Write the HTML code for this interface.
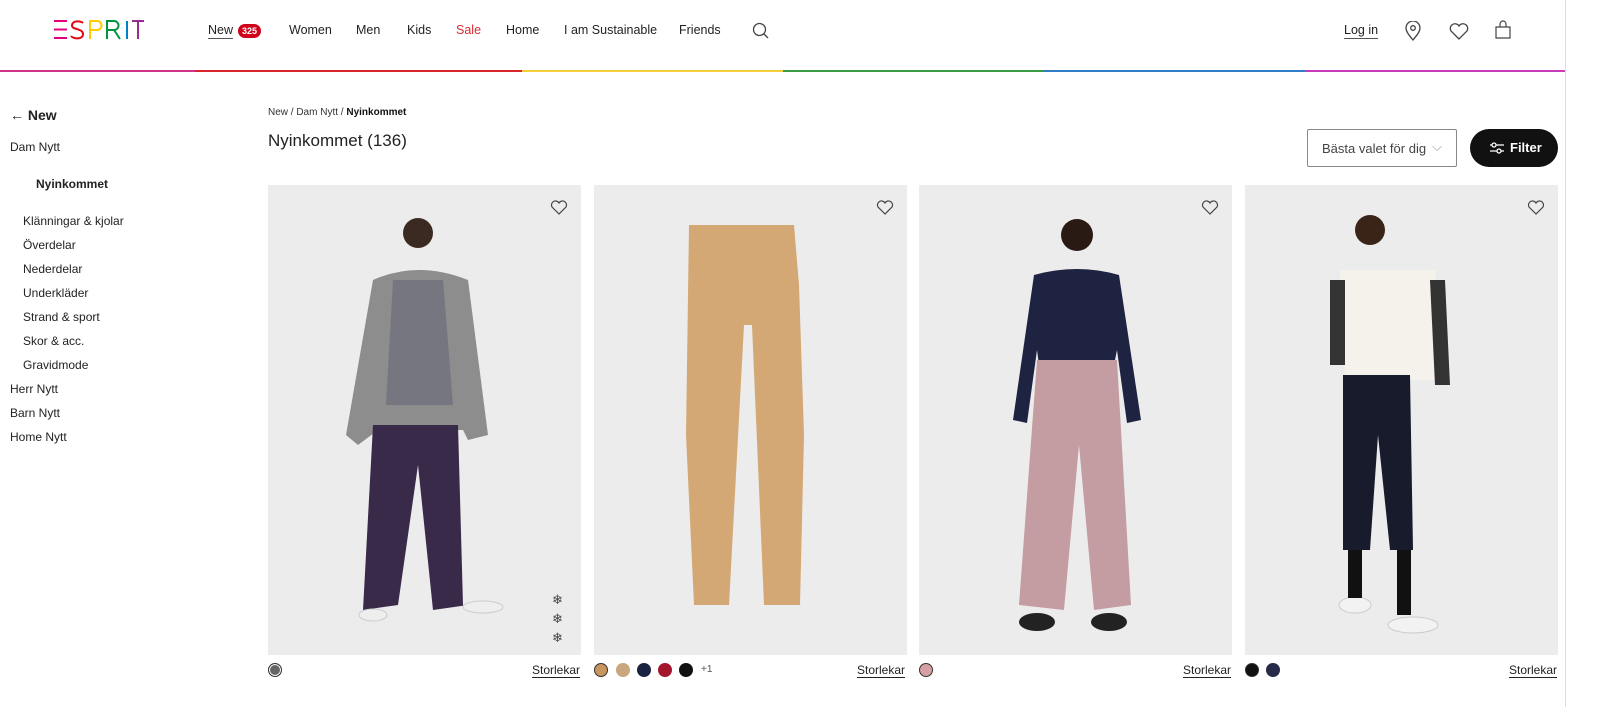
<!DOCTYPE html>
<html><head><meta charset="utf-8"><style>
*{margin:0;padding:0;box-sizing:border-box}
body{width:1600px;height:707px;overflow:hidden;background:#fff;font-family:"Liberation Sans",Arial,sans-serif;color:#222;position:relative}
.a{position:absolute;white-space:nowrap}
.nav{font-size:12.5px;top:23px}
.bar{position:absolute;top:70px;height:2px}
.side{font-size:12px;color:#222}
.card{position:absolute;top:185px;width:313px;height:470px;background:#ececec}
.heart{position:absolute;right:13px;top:14px}
.sw{position:absolute;top:663px;width:14px;height:14px;border-radius:50%}
.st{position:absolute;top:663px;font-size:12px;text-decoration:underline;text-underline-offset:3px}
</style></head><body>
<svg class="a" style="left:52px;top:19px" width="92" height="22" fill="none" stroke-width="2">
<path d="M2 2h13M2 10.5h13M2 19h13" stroke="#e4007c"/>
<path d="M31 4c-2-2-10-3-11 2s11 3 11 9-10 5-12 2" stroke="#e30613"/>
<path d="M38 20V2h7a4.5 4.5 0 010 9h-7" stroke="#ffcc00"/>
<path d="M55 20V2h7a4.5 4.5 0 010 9h-7M62 11l6 9" stroke="#009640"/>
<path d="M75 2v18" stroke="#0082c8"/>
<path d="M80 2h12M86 2v18" stroke="#9b2b8f"/>
</svg>
<div class="a nav" style="left:208px;border-bottom:1px solid #555;padding-bottom:1px">New</div>
<div class="a" style="left:238px;top:24px;background:#d0021b;color:#fff;font-size:9px;font-weight:bold;border-radius:8px;padding:2px 4px">325</div>
<div class="a nav" style="left:289px">Women</div>
<div class="a nav" style="left:356px">Men</div>
<div class="a nav" style="left:407px">Kids</div>
<div class="a nav" style="left:456px;color:#d62b35">Sale</div>
<div class="a nav" style="left:506px">Home</div>
<div class="a nav" style="left:564px">I am Sustainable</div>
<div class="a nav" style="left:679px">Friends</div>
<svg class="a" style="left:752px;top:22px" width="18" height="18" fill="none" stroke="#444" stroke-width="1.3"><circle cx="7.5" cy="7.5" r="6"/><path d="M12 12l4 4"/></svg>
<div class="a nav" style="left:1344px;border-bottom:1px solid #555;padding-bottom:1px">Log in</div>
<svg class="a" style="left:1404px;top:21px" width="18" height="20" fill="none" stroke="#444" stroke-width="1.3"><path d="M9 19C4 13 2 10 2 7a7 7 0 0114 0c0 3-2 6-7 12z"/><circle cx="9" cy="7" r="2.3"/></svg>
<svg class="a" style="left:1448px;top:22px" width="22" height="18" fill="none" stroke="#444" stroke-width="1.3"><path d="M11 17L3 9a4.5 4.5 0 018-5 4.5 4.5 0 018 5z"/></svg>
<svg class="a" style="left:1494px;top:20px" width="18" height="20" fill="none" stroke="#444" stroke-width="1.2"><path d="M2 7h14l0 11H2z"/><path d="M6 7V4a3 3 0 016 0v3"/></svg>
<div class="bar" style="left:0;width:195px;background:#d1338b"></div>
<div class="bar" style="left:195px;width:327px;background:#d7262e"></div>
<div class="bar" style="left:522px;width:261px;background:#f6cd3a"></div>
<div class="bar" style="left:783px;width:261px;background:#3a9a46"></div>
<div class="bar" style="left:1044px;width:261px;background:#2f7ec6"></div>
<div class="bar" style="left:1305px;width:260px;background:#c73bb8"></div>
<div style="position:absolute;left:1565px;top:0;width:1px;height:707px;background:#ddd"></div>

<div class="a" style="left:10px;top:107px;font-size:14px;font-weight:bold">← New</div>
<div class="a side" style="left:10px;top:140px">Dam Nytt</div>
<div class="a side" style="left:36px;top:177px;font-weight:bold">Nyinkommet</div>
<div class="a side" style="left:23px;top:214px">Klänningar &amp; kjolar</div>
<div class="a side" style="left:23px;top:238px">Överdelar</div>
<div class="a side" style="left:23px;top:262px">Nederdelar</div>
<div class="a side" style="left:23px;top:286px">Underkläder</div>
<div class="a side" style="left:23px;top:310px">Strand &amp; sport</div>
<div class="a side" style="left:23px;top:334px">Skor &amp; acc.</div>
<div class="a side" style="left:23px;top:358px">Gravidmode</div>
<div class="a side" style="left:10px;top:382px">Herr Nytt</div>
<div class="a side" style="left:10px;top:406px">Barn Nytt</div>
<div class="a side" style="left:10px;top:430px">Home Nytt</div>

<div class="a" style="left:268px;top:107px;font-size:10px;color:#333">New / Dam Nytt / <b style="color:#111">Nyinkommet</b></div>
<div class="a" style="left:268px;top:131px;font-size:17px">Nyinkommet (136)</div>
<div class="a" style="left:1307px;top:129px;width:150px;height:38px;border:1px solid #888;border-radius:2px;font-size:13px;padding:11px 14px;color:#444">Bästa valet för dig <span style="position:absolute;right:14px;top:9px;color:#999">⌵</span></div>
<div class="a" style="left:1470px;top:129px;width:88px;height:38px;background:#111;border-radius:19px;color:#fff;font-size:13px;font-weight:bold;padding:11px 0 0 40px">Filter</div>
<svg class="a" style="left:1489px;top:141px" width="16" height="14" fill="none" stroke="#fff" stroke-width="1.3"><path d="M1 4h14M1 10h14"/><circle cx="5" cy="4" r="2" fill="#111"/><circle cx="10" cy="10" r="2" fill="#111"/></svg>

<div class="card" style="left:268px">
<svg width="313" height="470">
<circle cx="150" cy="48" r="15" fill="#3b2a22"/>
<path d="M105 95 Q150 75 200 95 L220 250 L200 255 L195 245 L110 245 L90 260 L78 250 Z" fill="#8d8d8d"/>
<path d="M125 95 L175 95 L185 220 L118 220Z" fill="#767680"/>
<path d="M105 240 L190 240 L195 420 L200 420 L165 425 L150 280 L130 420 L95 425 Z" fill="#3a2a4a"/>
<ellipse cx="105" cy="430" rx="14" ry="6" fill="#eee" stroke="#ccc"/>
<ellipse cx="215" cy="422" rx="20" ry="6" fill="#eee" stroke="#ccc"/>
</svg>
<svg class="heart" width="18" height="16" fill="none" stroke="#444" stroke-width="1.2"><path d="M9 15L2 8a4 4 0 017-4 4 4 0 017 4z"/></svg>
<div style="position:absolute;left:284px;top:405px;font-size:13px;color:#444;line-height:19px">❄<br>❄<br>❄</div>
</div>
<div class="card" style="left:594px">
<svg width="313" height="470">
<path d="M95 40 L200 40 L205 100 L210 250 L206 420 L170 420 L158 140 L150 140 L135 420 L100 420 L92 250 Z" fill="#d4a874"/>
</svg>
<svg class="heart" width="18" height="16" fill="none" stroke="#444" stroke-width="1.2"><path d="M9 15L2 8a4 4 0 017-4 4 4 0 017 4z"/></svg>
</div>
<div class="card" style="left:919px">
<svg width="313" height="470">
<circle cx="158" cy="50" r="16" fill="#2a1a14"/>
<path d="M115 90 Q158 78 200 90 L222 235 L208 238 L198 165 L195 180 L120 180 L118 165 L108 238 L94 235 Z" fill="#1d2340"/>
<path d="M118 175 L198 175 L212 420 L175 425 L160 260 L145 425 L100 420 Z" fill="#c49da2"/>
<ellipse cx="118" cy="437" rx="18" ry="9" fill="#222"/>
<ellipse cx="190" cy="437" rx="18" ry="9" fill="#222"/>
</svg>
<svg class="heart" width="18" height="16" fill="none" stroke="#444" stroke-width="1.2"><path d="M9 15L2 8a4 4 0 017-4 4 4 0 017 4z"/></svg>
</div>
<div class="card" style="left:1245px">
<svg width="313" height="470">
<circle cx="125" cy="45" r="15" fill="#3a2418"/>
<path d="M95 85 L190 85 L200 195 L100 195 Z" fill="#f4f2ea"/>
<path d="M85 95 L100 95 L100 180 L85 180Z M185 95 L200 95 L205 200 L190 200Z" fill="#333"/>
<path d="M98 190 L165 190 L168 365 L145 365 L133 250 L125 365 L98 365 Z" fill="#171b2b"/>
<ellipse cx="110" cy="420" rx="16" ry="8" fill="#f2f2f2" stroke="#ccc"/>
<ellipse cx="168" cy="440" rx="25" ry="8" fill="#f2f2f2" stroke="#ccc"/>
<rect x="103" y="365" width="14" height="48" fill="#111"/><rect x="152" y="365" width="14" height="65" fill="#111"/>
</svg>
<svg class="heart" width="18" height="16" fill="none" stroke="#444" stroke-width="1.2"><path d="M9 15L2 8a4 4 0 017-4 4 4 0 017 4z"/></svg>
</div>

<div class="sw" style="left:268px;background:#666;box-shadow:0 0 0 1px #fff inset;border:1px solid #333"></div>
<div class="st" style="left:532px">Storlekar</div>
<div class="sw" style="left:594px;background:#c8955f;border:1px solid #333"></div>
<div class="sw" style="left:616px;background:#c8a77e"></div>
<div class="sw" style="left:637px;background:#1a2340"></div>
<div class="sw" style="left:658px;background:#a3152a"></div>
<div class="sw" style="left:679px;background:#111"></div>
<div class="a" style="left:701px;top:664px;font-size:10px;color:#555">+1</div>
<div class="st" style="left:857px">Storlekar</div>
<div class="sw" style="left:919px;background:#d4a0a4;border:1px solid #333"></div>
<div class="st" style="left:1183px">Storlekar</div>
<div class="sw" style="left:1245px;background:#111;border:1px solid #333"></div>
<div class="sw" style="left:1266px;background:#252b48"></div>
<div class="st" style="left:1509px">Storlekar</div>
</body></html>
